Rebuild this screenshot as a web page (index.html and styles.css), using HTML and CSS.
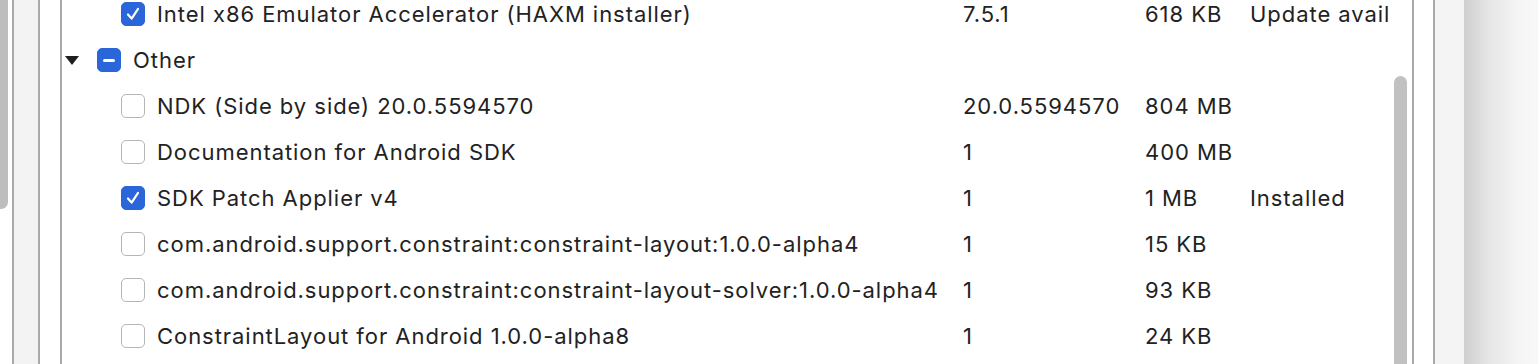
FILE: index.html
```html
<!DOCTYPE html>
<html>
<head>
<meta charset="utf-8">
<link rel="stylesheet" href="styles.css">
</head>
<body>
<div class="window">
  <div class="left-scroll"><div class="left-thumb"></div></div>
  <div class="gap-white"></div>
  <div class="vline"></div>
  <div class="side-light"></div>
  <div class="vline"></div>
  <div class="side-white"></div>
  <div class="vline"></div>
  <div class="main">
    <div class="list">
      <div class="row child">
        <span class="cb checked"><svg viewBox="0 0 24 24"><path d="M6.5 12.5 L10.5 17 L17.5 6.5" /></svg></span>
        <span class="name">Intel x86 Emulator Accelerator (HAXM installer)</span>
        <span class="ver">7.5.1</span><span class="size">618 KB</span><span class="status">Update avail</span>
      </div>
      <div class="row group">
        <span class="tri"></span>
        <span class="cb checked mixed"><span class="minus"></span></span>
        <span class="name">Other</span>
      </div>
      <div class="row child">
        <span class="cb"></span>
        <span class="name">NDK (Side by side) 20.0.5594570</span>
        <span class="ver">20.0.5594570</span><span class="size">804 MB</span><span class="status"></span>
      </div>
      <div class="row child">
        <span class="cb"></span>
        <span class="name">Documentation for Android SDK</span>
        <span class="ver">1</span><span class="size">400 MB</span><span class="status"></span>
      </div>
      <div class="row child">
        <span class="cb checked"><svg viewBox="0 0 24 24"><path d="M6.5 12.5 L10.5 17 L17.5 6.5" /></svg></span>
        <span class="name">SDK Patch Applier v4</span>
        <span class="ver">1</span><span class="size">1 MB</span><span class="status">Installed</span>
      </div>
      <div class="row child">
        <span class="cb"></span>
        <span class="name">com.android.support.constraint:constraint-layout:1.0.0-alpha4</span>
        <span class="ver">1</span><span class="size">15 KB</span><span class="status"></span>
      </div>
      <div class="row child">
        <span class="cb"></span>
        <span class="name">com.android.support.constraint:constraint-layout-solver:1.0.0-alpha4</span>
        <span class="ver">1</span><span class="size">93 KB</span><span class="status"></span>
      </div>
      <div class="row child">
        <span class="cb"></span>
        <span class="name">ConstraintLayout for Android 1.0.0-alpha8</span>
        <span class="ver">1</span><span class="size">24 KB</span><span class="status"></span>
      </div>
    </div>
    <div class="track"><div class="thumb"></div></div>
  </div>
  <div class="vline"></div>
  <div class="right-white"></div>
  <div class="vline"></div>
  <div class="right-light"></div>
  <div class="shadow"></div>
</div>
</body>
</html>
```
FILE: styles.css
```css
html, body {
  margin: 0;
  padding: 0;
  background: #ffffff;
  overflow: hidden;
}
.window {
  display: flex;
  width: 1538px;
  height: 364px;
  overflow: hidden;
  font-family: "Inter", "Liberation Sans", sans-serif;
  color: #222222;
}
.left-scroll {
  width: 8px;
  flex: none;
}
.left-thumb {
  width: 8px;
  height: 209px;
  background: #bdbdbd;
  border-bottom-right-radius: 7px;
}
.gap-white { width: 4px; flex: none; background: #fff; }
.vline { width: 2px; flex: none; background: #a9a9a9; }
.side-light { width: 24px; flex: none; background: #f3f3f3; }
.side-white { width: 20px; flex: none; background: #ffffff; }
.main {
  width: 1350px;
  flex: none;
  display: flex;
  background: #fff;
}
.list {
  width: 1332px;
  margin-top: -9px;
}
.row {
  height: 46px;
  display: flex;
  align-items: center;
  font-size: 22px;
  letter-spacing: 0.95px;
  white-space: nowrap;
}
.row.child { padding-left: 59px; }
.row.group { padding-left: 3px; }
.tri {
  width: 0;
  height: 0;
  border-left: 7px solid transparent;
  border-right: 7px solid transparent;
  border-top: 9px solid #1e1e1e;
  margin-right: 18px;
  margin-top: 1px;
}
.cb {
  width: 24px;
  height: 24px;
  box-sizing: border-box;
  border: 1.5px solid #b5b5b5;
  border-radius: 5px;
  background: #fff;
  flex: none;
  margin-right: 12px;
  display: flex;
  align-items: center;
  justify-content: center;
}
.cb.checked {
  background: #2a66d9;
  border-color: #2a66d9;
}
.cb svg {
  width: 22px;
  height: 22px;
  fill: none;
  stroke: #fff;
  stroke-width: 2.4;
  stroke-linecap: round;
  stroke-linejoin: round;
}
.minus {
  width: 12px;
  height: 3px;
  border-radius: 1.5px;
  background: #fff;
}
.name { width: 806px; flex: none; overflow: hidden; }
.ver { width: 182px; flex: none; }
.size { width: 105px; flex: none; }
.status { flex: none; }
.track {
  width: 18px;
  flex: none;
  padding-left: 0;
}
.thumb {
  width: 13px;
  margin-top: 76px;
  height: 300px;
  background: #c1c1c1;
  border-radius: 7px 7px 0 0;
}
.right-white { width: 19px; flex: none; background: #fff; }
.right-light { width: 29px; flex: none; background: #f4f4f4; }
.shadow {
  flex: 1;
  background: linear-gradient(to right, #cfcfcf 0%, #e6e6e6 35%, #f5f5f5 75%, #f8f8f8 100%);
}
```
